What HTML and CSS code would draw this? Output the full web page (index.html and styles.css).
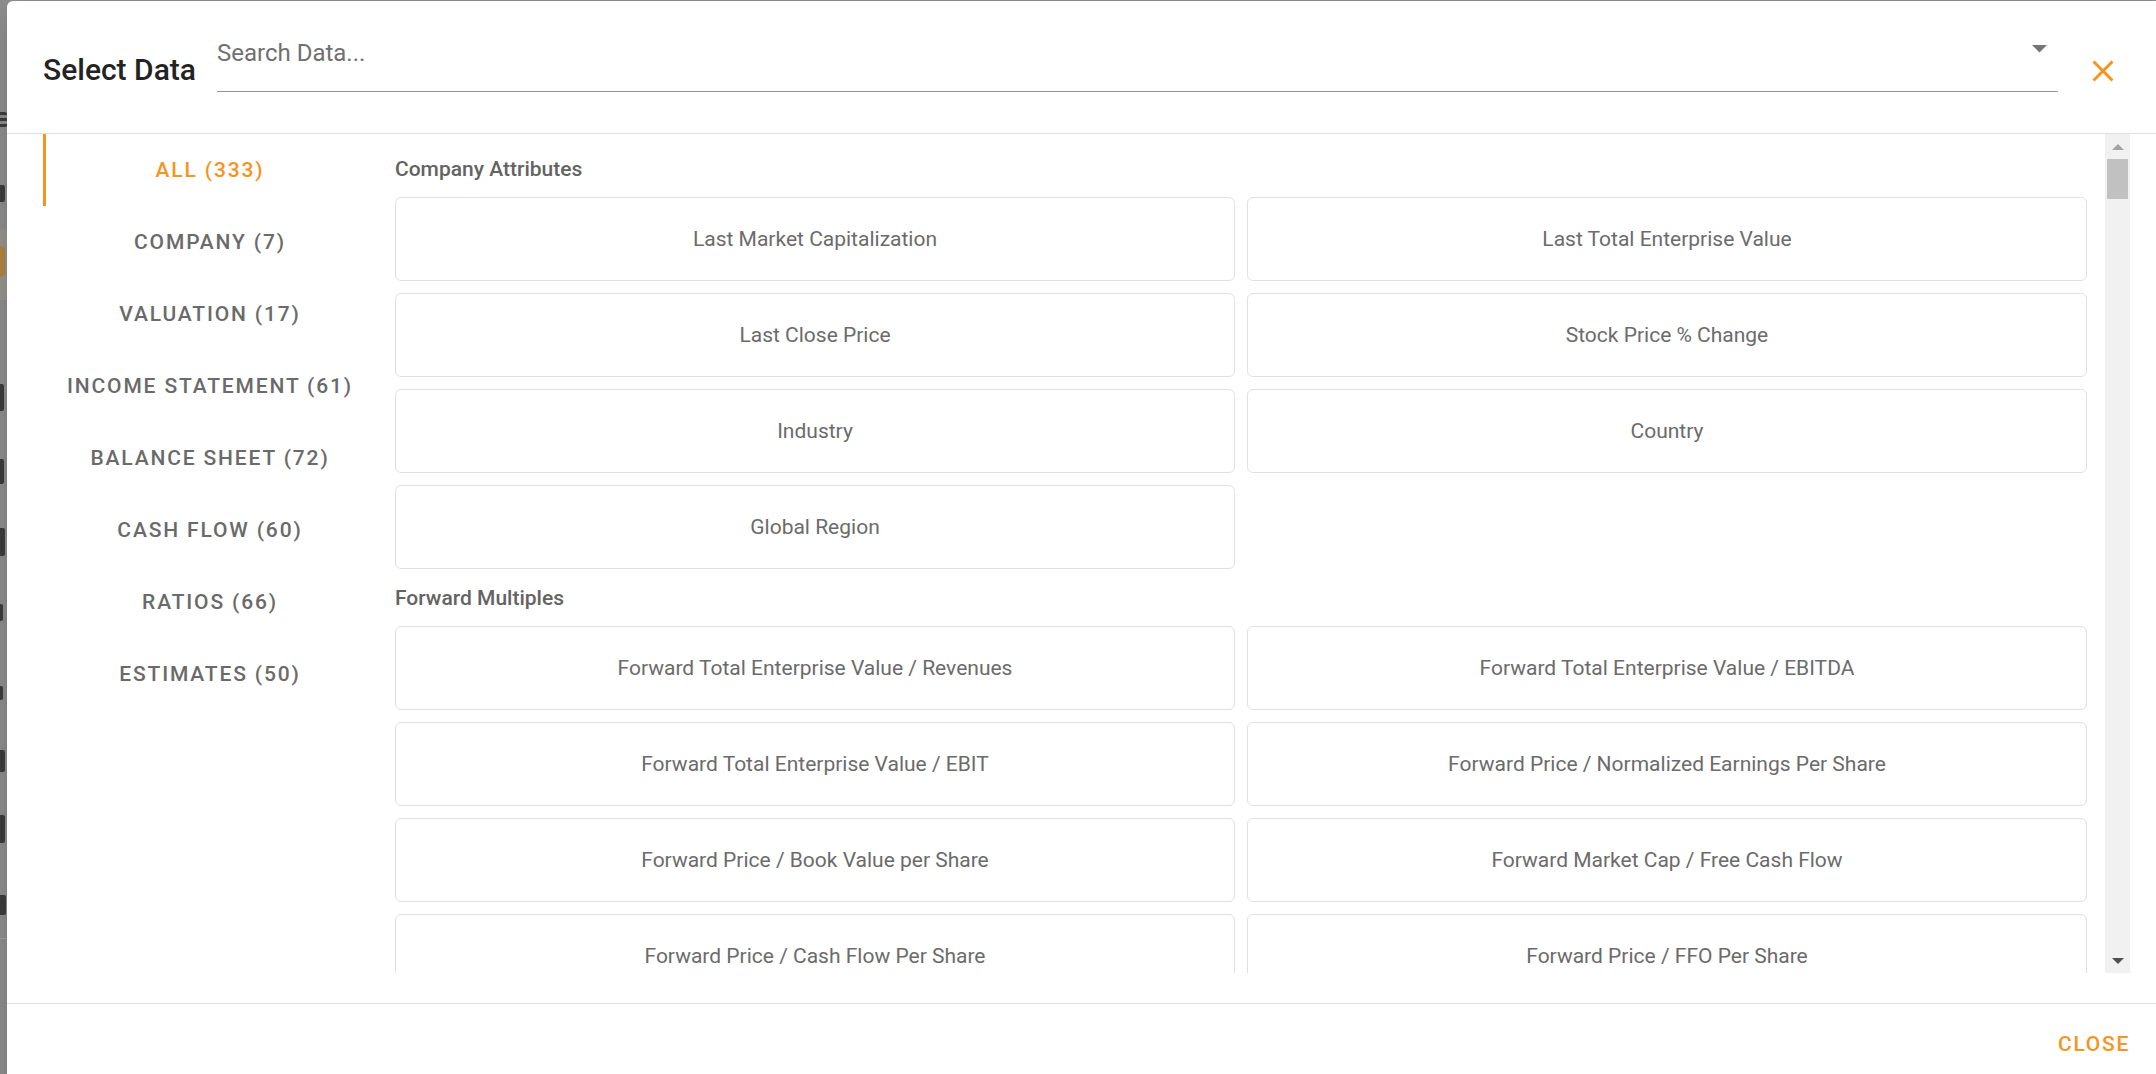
FILE: index.html
```html
<!DOCTYPE html>
<html lang="en">
<head>
<meta charset="utf-8">
<title>Select Data</title>
<link rel="stylesheet" href="styles.css">
</head>
<body>
  <aside class="rail">
    <span class="rail-icon rail-ham"></span>
    <span class="rail-icon rail-person"></span>
    <span class="rail-active"><span class="rail-dot"></span></span>
    <span class="rail-icon rail-grid"></span>
    <span class="rail-icon rail-bag"></span>
    <span class="rail-icon rail-bank"></span>
    <span class="rail-icon rail-dollar"></span>
    <span class="rail-icon rail-trend"></span>
    <span class="rail-icon rail-person2"></span>
    <span class="rail-icon rail-doc"></span>
    <span class="rail-icon rail-bars"></span>
    <span class="rail-line"></span>
  </aside>

  <div class="dialog" role="dialog" aria-label="Select Data">
    <header class="dialog-header">
      <h2 class="dialog-title">Select Data</h2>
      <div class="search-field">
        <input class="search-input" type="text" placeholder="Search Data...">
        <svg class="dropdown-caret" width="15" height="8" viewBox="0 0 15 8"><polygon points="0,0 15,0 7.5,7.5" fill="#757575"/></svg>
      </div>
      <button class="close-btn" aria-label="Close">
        <svg width="36" height="36" viewBox="0 0 24 24"><path d="M19 6.41L17.59 5 12 10.59 6.41 5 5 6.41 10.59 12 5 17.59 6.41 19 12 13.41 17.59 19 19 17.59 13.41 12z" fill="#f5941e"/></svg>
      </button>
    </header>

    <div class="dialog-body">
      <nav class="nav">
        <div class="nav-item active">All (333)</div>
        <div class="nav-item">Company (7)</div>
        <div class="nav-item">Valuation (17)</div>
        <div class="nav-item">Income Statement (61)</div>
        <div class="nav-item">Balance Sheet (72)</div>
        <div class="nav-item">Cash Flow (60)</div>
        <div class="nav-item">Ratios (66)</div>
        <div class="nav-item">Estimates (50)</div>
      </nav>

      <div class="pane">
        <h3 class="section-title">Company Attributes</h3>
        <div class="grid">
          <div class="card">Last Market Capitalization</div>
          <div class="card">Last Total Enterprise Value</div>
          <div class="card">Last Close Price</div>
          <div class="card">Stock Price % Change</div>
          <div class="card">Industry</div>
          <div class="card">Country</div>
          <div class="card">Global Region</div>
        </div>

        <h3 class="section-title">Forward Multiples</h3>
        <div class="grid">
          <div class="card">Forward Total Enterprise Value / Revenues</div>
          <div class="card">Forward Total Enterprise Value / EBITDA</div>
          <div class="card">Forward Total Enterprise Value / EBIT</div>
          <div class="card">Forward Price / Normalized Earnings Per Share</div>
          <div class="card">Forward Price / Book Value per Share</div>
          <div class="card">Forward Market Cap / Free Cash Flow</div>
          <div class="card">Forward Price / Cash Flow Per Share</div>
          <div class="card">Forward Price / FFO Per Share</div>
        </div>
      </div>

      <div class="scrollbar" aria-hidden="true">
        <div class="sb-btn"><span class="sb-arrow-up"></span></div>
        <div class="sb-thumb"></div>
        <div class="sb-fill"></div>
        <div class="sb-btn"><span class="sb-arrow-down"></span></div>
      </div>
    </div>

    <footer class="dialog-footer">
      <button class="close-text-btn">Close</button>
    </footer>
  </div>
</body>
</html>
```
FILE: styles.css
```css
* {
  box-sizing: border-box;
}

html,
body {
  margin: 0;
  padding: 0;
}

body {
  width: 2156px;
  height: 1074px;
  overflow: hidden;
  position: relative;
  background: #8e8e8e;
  font-family: Roboto, "Liberation Sans", Arial, sans-serif;
}

/* underlying app rail, dimmed by backdrop */
.rail {
  width: 7px;
  height: 1074px;
  display: flex;
  flex-direction: column;
  overflow: hidden;
}

.rail-icon {
  display: block;
  width: 5px;
  background: #3d3d3d;
  border-radius: 0 2px 2px 0;
  flex: none;
}

.rail-ham {
  margin-top: 112px;
  height: 15px;
  width: 7px;
  background: linear-gradient(#3d3d3d 0 3px, transparent 3px 6px, #3d3d3d 6px 9px, transparent 9px 12px, #3d3d3d 12px 15px);
}

.rail-person { margin-top: 58px; height: 17px; }

.rail-active {
  display: block;
  flex: none;
  margin-top: 27px;
  height: 71px;
  width: 7px;
  background: #989590;
  padding-top: 17px;
}

.rail-dot {
  display: block;
  height: 31px;
  width: 5px;
  background: #b7843f;
  border-radius: 0 8px 8px 0;
}

.rail-grid { margin-top: 84px; height: 27px; width: 4px; }
.rail-bag { margin-top: 48px; height: 25px; width: 4px; }
.rail-bank { margin-top: 44px; height: 28px; width: 5px; }
.rail-dollar { margin-top: 48px; height: 17px; width: 3px; }
.rail-trend { margin-top: 65px; height: 14px; width: 3px; }
.rail-person2 { margin-top: 50px; height: 22px; width: 5px; }
.rail-doc { margin-top: 43px; height: 28px; width: 5px; }
.rail-bars { margin-top: 52px; height: 20px; width: 6px; }

.rail-line {
  display: block;
  flex: none;
  margin-top: 23px;
  height: 1px;
  width: 7px;
  background: #a3a3a3;
}

/* dialog overlay */
.dialog {
  position: absolute;
  left: 7px;
  top: 1px;
  width: 2159px;
  height: 1110px;
  background: #ffffff;
  border-radius: 6px;
  box-shadow: 0 16px 36px rgba(0, 0, 0, 0.18);
  display: flex;
  flex-direction: column;
}

.dialog-header {
  flex: none;
  height: 133px;
  display: flex;
  align-items: flex-start;
  padding: 0 36px;
  border-bottom: 1px solid #e0e0e0;
}

.dialog-title {
  margin: 51px 0 0;
  font-size: 30px;
  line-height: 36px;
  font-weight: 500;
  color: #232323;
  white-space: nowrap;
}

.search-field {
  flex: 1;
  margin: 37px 0 0 21px;
  height: 54px;
  display: flex;
  align-items: flex-start;
  border-bottom: 1px solid #949494;
}

.search-input {
  flex: 1;
  min-width: 0;
  height: 30px;
  margin: 0;
  padding: 0;
  border: 0;
  outline: 0;
  background: transparent;
  font-family: Roboto, "Liberation Sans", Arial, sans-serif;
  font-size: 24px;
  line-height: 30px;
  color: #212121;
}

.search-input::placeholder {
  color: #707070;
  opacity: 1;
}

.dropdown-caret {
  flex: none;
  margin: 7px 11px 0 12px;
}

.close-btn {
  flex: none;
  width: 48px;
  height: 48px;
  margin: 46px 3px 0 21px;
  padding: 0;
  border: 0;
  background: transparent;
  display: flex;
  align-items: center;
  justify-content: center;
}

.dialog-body {
  flex: none;
  height: 839px;
  display: flex;
  padding: 0 36px;
}

.nav {
  flex: none;
  width: 334px;
  display: flex;
  flex-direction: column;
}

.nav-item {
  height: 72px;
  display: flex;
  align-items: center;
  justify-content: center;
  font-size: 21px;
  font-weight: 500;
  letter-spacing: 1.85px;
  text-transform: uppercase;
  color: #6a6a6a;
  white-space: nowrap;
}

.nav-item.active {
  color: #f5941e;
  box-shadow: inset 3px 0 0 #f5941e;
}

.pane {
  flex: 1;
  min-width: 0;
  overflow: hidden;
  padding: 20px 18px 0;
}

.section-title {
  margin: 0 0 13px;
  font-size: 21px;
  line-height: 30px;
  font-weight: 500;
  color: #636363;
}

.grid {
  display: grid;
  grid-template-columns: 1fr 1fr;
  gap: 12px;
  margin-bottom: 14px;
}

.card {
  height: 84px;
  border: 1px solid #e0e0e0;
  border-radius: 6px;
  display: flex;
  align-items: center;
  justify-content: center;
  font-size: 21px;
  color: #6b6b6b;
  white-space: nowrap;
}

/* scrollbar */
.scrollbar {
  flex: none;
  width: 25px;
  background: #f1f1f1;
  display: flex;
  flex-direction: column;
}

.sb-btn {
  flex: none;
  height: 25px;
  display: flex;
  align-items: center;
  justify-content: center;
}

.sb-arrow-up,
.sb-arrow-down {
  width: 0;
  height: 0;
  border-left: 6px solid transparent;
  border-right: 6px solid transparent;
}

.sb-arrow-up {
  border-bottom: 6px solid #a3a3a3;
}

.sb-arrow-down {
  border-top: 6px solid #505050;
}

.sb-thumb {
  flex: none;
  height: 40px;
  margin: 0 2px;
  background: #c1c1c1;
}

.sb-fill {
  flex: 1;
}

.dialog-footer {
  flex: none;
  margin-top: 30px;
  padding: 13px 36px 0;
  border-top: 1px solid #e0e0e0;
  display: flex;
  justify-content: flex-end;
}

.close-text-btn {
  height: 54px;
  padding: 0;
  margin: 0;
  border: 0;
  background: transparent;
  font-family: Roboto, "Liberation Sans", Arial, sans-serif;
  font-size: 21px;
  line-height: 54px;
  font-weight: 500;
  letter-spacing: 1.7px;
  text-transform: uppercase;
  color: #f5941e;
}
```
